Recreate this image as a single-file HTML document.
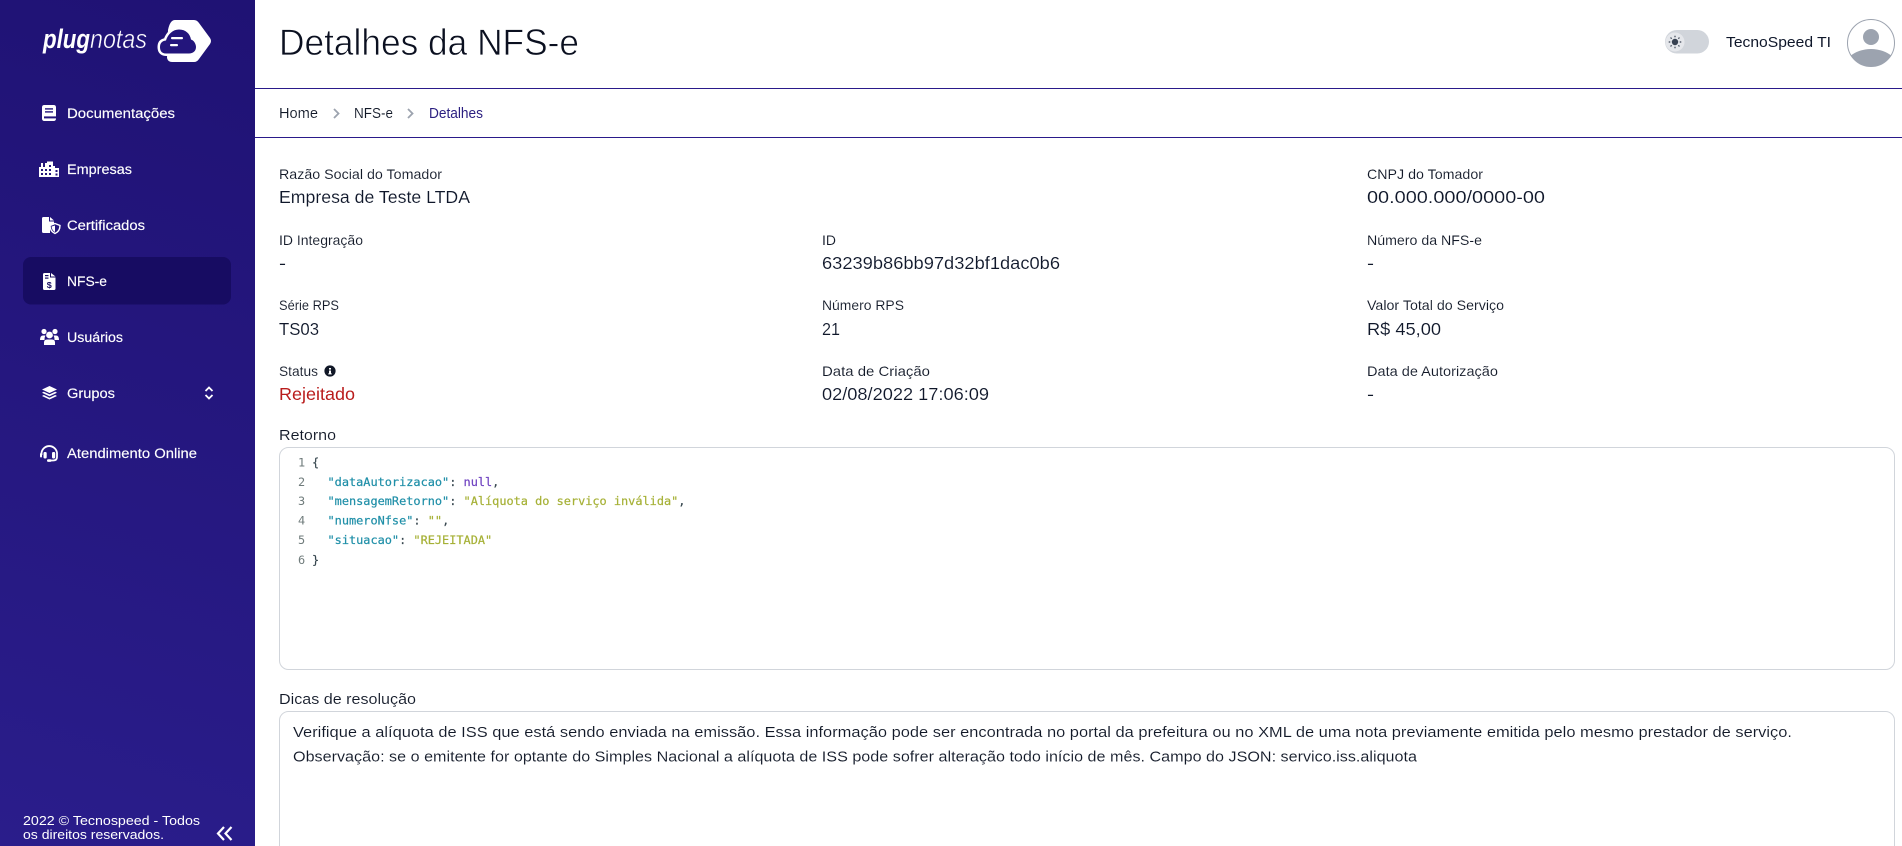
<!DOCTYPE html>
<html lang="pt-BR">
<head>
<meta charset="utf-8">
<title>Detalhes da NFS-e</title>
<style>
html,body{margin:0;padding:0;background:#fff;width:1902px;height:846px;overflow:hidden}
svg{display:block;position:absolute;left:0;top:0}
text{font-family:"Liberation Sans",Arial,sans-serif;white-space:pre}
.nav{fill:#fff;font-size:14.2px;stroke:#fff;stroke-width:.15px}
.l{fill:#111827;font-size:13.8px;stroke:#fff;stroke-width:.1px}
.v{fill:#0f172a;font-size:17.8px;stroke:#fff;stroke-width:.12px}
.d{fill:#111827;font-size:14.6px;stroke:#fff;stroke-width:.1px}
.c text,.c{font-family:"DejaVu Sans Mono","Liberation Mono",monospace;font-size:11.9px}
.n{fill:#6f7b7b}
.k{fill:#1f8fa8;stroke:#1f8fa8;stroke-width:.2px}
.s{fill:#a6b136;stroke:#a6b136;stroke-width:.2px}
.p{fill:#37474f;stroke:#37474f;stroke-width:.15px}
.u{fill:#6f42c1;stroke:#6f42c1;stroke-width:.2px}
</style>
</head>
<body>
<svg width="1902" height="846" viewBox="0 0 1902 846" xmlns="http://www.w3.org/2000/svg">
<defs>
<linearGradient id="g" gradientUnits="userSpaceOnUse" x1="0" y1="846" x2="255" y2="0">
<stop offset="0" stop-color="#2a1d8b"/><stop offset=".6" stop-color="#24167d"/><stop offset="1" stop-color="#1f1274"/>
</linearGradient>
<clipPath id="av"><circle cx="1871" cy="43" r="23.5"/></clipPath>
</defs>
<rect width="1902" height="846" fill="#fff"/>

<!-- Sidebar -->
<rect width="255" height="846" fill="url(#g)"/>
<text x="43" y="48" font-size="27" font-weight="700" font-style="italic" fill="#fff" textLength="47" lengthAdjust="spacingAndGlyphs">plug</text>
<text x="90" y="48" font-size="27" font-style="italic" fill="#fff" stroke="#22157c" stroke-width=".5" textLength="57" lengthAdjust="spacingAndGlyphs">notas</text>
<path d="M175 20H194Q197 20 199 23L210 38Q212 41 210 44L199 59Q197 62 194 62H172Q168 62 167 58L168 30Q170 20 175 20Z" fill="#fff"/>
<path d="M166 53.5C161 53.5 160 50 160 47C160 43 162 41 166 40.5C168 34 173 29.5 179 29.5C186 29.5 190 34 191 39.5C194 40.5 196 44 196 47C196 51 193 53.5 189 53.5Z" fill="#fff" stroke="#fff" stroke-width="5"/>
<path d="M166 53.5C161 53.5 160 50 160 47C160 43 162 41 166 40.5C168 34 173 29.5 179 29.5C186 29.5 190 34 191 39.5C194 40.5 196 44 196 47C196 51 193 53.5 189 53.5Z" fill="#23157c"/>
<rect x="171" y="37" width="12" height="2.2" rx="1" fill="#fff"/>
<rect x="170" y="44" width="8" height="2.2" rx="1" fill="#fff"/>

<rect x="23" y="257" width="208" height="47.5" rx="8" fill="#170c62"/>

<text class="nav" x="67" y="118" textLength="108" lengthAdjust="spacingAndGlyphs">Documentações</text>
<text class="nav" x="67" y="174" textLength="65" lengthAdjust="spacingAndGlyphs">Empresas</text>
<text class="nav" x="67" y="230" textLength="78" lengthAdjust="spacingAndGlyphs">Certificados</text>
<text class="nav" x="67" y="286" textLength="40" lengthAdjust="spacingAndGlyphs">NFS-e</text>
<text class="nav" x="67" y="342" textLength="56" lengthAdjust="spacingAndGlyphs">Usuários</text>
<text class="nav" x="67" y="398" textLength="48" lengthAdjust="spacingAndGlyphs">Grupos</text>
<text class="nav" x="67" y="458" textLength="130" lengthAdjust="spacingAndGlyphs">Atendimento Online</text>

<!-- book -->
<rect x="42" y="105" width="14" height="16" rx="2.2" fill="#fff"/>
<rect x="45" y="108.2" width="8" height="1.4" fill="#23157c"/><rect x="45" y="111.2" width="8" height="1.4" fill="#23157c"/>
<rect x="44" y="116.4" width="12" height="2" fill="#23157c"/>
<!-- city -->
<path d="M39 167H41V163H43V167H45V163H47V161.5H53V166H55V168H59V177H39Z" fill="#fff"/>
<g fill="#23157c"><rect x="41" y="169" width="2" height="2"/><rect x="45" y="169" width="2" height="2"/><rect x="49" y="169" width="2" height="2"/><rect x="41" y="173" width="2" height="2"/><rect x="45" y="173" width="2" height="2"/><rect x="49" y="173" width="2" height="2"/><rect x="49" y="165" width="2" height="2"/><rect x="55.5" y="170" width="2" height="2"/><rect x="55.5" y="173.5" width="2" height="2"/></g>
<!-- certificate -->
<path d="M42 218.5Q42 217 43.5 217H49V221.5H54V224.5L50 226V233H43.5Q42 233 42 231.5Z" fill="#fff"/><path d="M50 217L54 220.5H50Z" fill="#fff"/>
<path d="M55 223.5L60 225.5C60 229 58.5 232 55 233.5C51.5 232 50 229 50 225.5Z" fill="none" stroke="#fff" stroke-width="1.4"/>
<path d="M55 225.5V232C53 231 51.8 229 51.6 226.5Z" fill="#fff"/>
<!-- nfs-e -->
<path d="M43 274.5Q43 273 44.5 273H50V277.5H55.5V288.5Q55.5 290 54 290H44.5Q43 290 43 288.5Z" fill="#fff"/><path d="M51 273L55.5 276.5H51Z" fill="#fff"/>
<rect x="45" y="275" width="3.5" height="1.2" fill="#170c62"/><rect x="45" y="277.5" width="3.5" height="1.2" fill="#170c62"/>
<text x="46.8" y="288" font-size="8.5" font-weight="700" fill="#170c62" textLength="5" lengthAdjust="spacingAndGlyphs">$</text>
<!-- users -->
<g fill="#fff"><circle cx="44" cy="331.5" r="2.6"/><circle cx="55" cy="331.5" r="2.6"/><circle cx="49.5" cy="335" r="3.4"/>
<path d="M40 340Q40 335.5 43 335.5H45.5Q44.5 337 44.5 340Z"/><path d="M59 340Q59 335.5 56 335.5H53.5Q54.5 337 54.5 340Z"/>
<path d="M44 345V342.5Q44 339.5 47 339.5H52Q55 339.5 55 342.5V345Z"/></g>
<!-- layers -->
<g fill="#fff"><path d="M49.5 386L57 389.5L49.5 393L42 389.5Z"/><path d="M43.8 391.7L49.5 394.4L55.2 391.7L57 392.7L49.5 396.2L42 392.7Z"/><path d="M43.8 395L49.5 397.7L55.2 395L57 396L49.5 399.5L42 396Z"/></g>
<!-- chevrons -->
<path d="M205.5 391L209 387.5L212.5 391M205.5 395L209 398.5L212.5 395" fill="none" stroke="#fff" stroke-width="1.8"/>
<!-- headset -->
<path d="M41.5 455V453A7.8 7.8 0 0 1 57 453V457Q57 460.5 53 460.5H49" fill="none" stroke="#fff" stroke-width="1.8"/>
<rect x="43.5" y="452" width="3.2" height="6.5" rx="1.2" fill="#fff"/><rect x="52" y="452" width="3.2" height="6.5" rx="1.2" fill="#fff"/>
<rect x="40" y="453" width="2" height="4.5" rx="1" fill="#fff"/><rect x="47" y="459.3" width="4.5" height="2.6" rx="1.2" fill="#fff"/>

<text x="23" y="825" font-size="13" fill="#fff" textLength="177" lengthAdjust="spacingAndGlyphs">2022 © Tecnospeed - Todos</text>
<text x="23" y="839" font-size="13" fill="#fff" textLength="141" lengthAdjust="spacingAndGlyphs">os direitos reservados.</text>
<path d="M224 827L218 833.5L224 840M231.5 827L225.5 833.5L231.5 840" fill="none" stroke="#fff" stroke-width="2.2"/>

<!-- Header -->
<text x="279" y="55" font-size="37" fill="#0b1020" stroke="#fff" stroke-width=".7" textLength="300" lengthAdjust="spacingAndGlyphs">Detalhes da NFS-e</text>
<rect x="1665" y="30" width="44" height="23.5" rx="11.75" fill="#d1d5db"/>
<circle cx="1675" cy="42" r="9.5" fill="#e5e7eb"/>
<circle cx="1675" cy="42" r="3.2" fill="#374151"/>
<g stroke="#374151" stroke-width="1.2" stroke-linecap="round"><path d="M1675 36.2v.6M1675 47.2v.6M1669.2 42h.6M1680.2 42h.6M1670.9 37.9l.4.4M1678.7 45.7l.4.4M1670.9 46.1l.4-.4M1678.7 38.3l.4-.4"/></g>
<text x="1726" y="47" font-size="14.8" fill="#0f172a" textLength="105" lengthAdjust="spacingAndGlyphs">TecnoSpeed TI</text>
<circle cx="1871" cy="43" r="23.5" fill="#fff" stroke="#9ca3af" stroke-width="1"/>
<circle cx="1871" cy="37" r="8" fill="#9ca3af"/>
<g clip-path="url(#av)"><ellipse cx="1871" cy="74" rx="30" ry="25" fill="#9ca3af"/></g>

<rect x="255" y="88" width="1647" height="1" fill="#2a1a8a"/>
<rect x="255" y="137" width="1647" height="1" fill="#2a1a8a"/>

<!-- Breadcrumb -->
<text class="d" x="279" y="118" textLength="39" lengthAdjust="spacingAndGlyphs">Home</text>
<path d="M334 109L338.5 113.5L334 118" fill="none" stroke="#9ca3af" stroke-width="1.8"/>
<text class="d" x="354" y="118" textLength="39" lengthAdjust="spacingAndGlyphs">NFS-e</text>
<path d="M408 109L412.5 113.5L408 118" fill="none" stroke="#9ca3af" stroke-width="1.8"/>
<text x="429" y="118" font-size="14.6" fill="#2b1f80" textLength="54" lengthAdjust="spacingAndGlyphs">Detalhes</text>

<!-- Fields col 1 -->
<text class="l" x="279" y="179" textLength="163" lengthAdjust="spacingAndGlyphs">Razão Social do Tomador</text>
<text class="v" x="279" y="203" textLength="191" lengthAdjust="spacingAndGlyphs">Empresa de Teste LTDA</text>
<text class="l" x="279" y="245" textLength="84" lengthAdjust="spacingAndGlyphs">ID Integração</text>
<text class="v" x="279" y="269" textLength="7" lengthAdjust="spacingAndGlyphs">-</text>
<text class="l" x="279" y="310" textLength="60" lengthAdjust="spacingAndGlyphs">Série RPS</text>
<text class="v" x="279" y="335" textLength="40" lengthAdjust="spacingAndGlyphs">TS03</text>
<text class="l" x="279" y="376" textLength="39" lengthAdjust="spacingAndGlyphs">Status</text>
<circle cx="330" cy="371" r="5.6" fill="#111827"/><rect x="329" y="368" width="2" height="1.6" fill="#fff"/><rect x="329" y="370.5" width="2" height="3.2" fill="#fff"/><rect x="328.2" y="373.4" width="3.6" height="1" fill="#fff"/>
<text x="279" y="400" font-size="17.8" fill="#b91c1c" textLength="76" lengthAdjust="spacingAndGlyphs">Rejeitado</text>

<!-- Fields col 2 -->
<text class="l" x="822" y="245" textLength="14" lengthAdjust="spacingAndGlyphs">ID</text>
<text class="v" x="822" y="269" textLength="238" lengthAdjust="spacingAndGlyphs">63239b86bb97d32bf1dac0b6</text>
<text class="l" x="822" y="310" textLength="82" lengthAdjust="spacingAndGlyphs">Número RPS</text>
<text class="v" x="822" y="335" textLength="18" lengthAdjust="spacingAndGlyphs">21</text>
<text class="l" x="822" y="376" textLength="108" lengthAdjust="spacingAndGlyphs">Data de Criação</text>
<text class="v" x="822" y="400" textLength="167" lengthAdjust="spacingAndGlyphs">02/08/2022 17:06:09</text>

<!-- Fields col 3 -->
<text class="l" x="1367" y="179" textLength="116" lengthAdjust="spacingAndGlyphs">CNPJ do Tomador</text>
<text class="v" x="1367" y="203" textLength="178" lengthAdjust="spacingAndGlyphs">00.000.000/0000-00</text>
<text class="l" x="1367" y="245" textLength="115" lengthAdjust="spacingAndGlyphs">Número da NFS-e</text>
<text class="v" x="1367" y="269" textLength="7" lengthAdjust="spacingAndGlyphs">-</text>
<text class="l" x="1367" y="310" textLength="137" lengthAdjust="spacingAndGlyphs">Valor Total do Serviço</text>
<text class="v" x="1367" y="335" textLength="74" lengthAdjust="spacingAndGlyphs">R$ 45,00</text>
<text class="l" x="1367" y="376" textLength="131" lengthAdjust="spacingAndGlyphs">Data de Autorização</text>
<text class="v" x="1367" y="400" textLength="7" lengthAdjust="spacingAndGlyphs">-</text>

<!-- Retorno -->
<text class="d" x="279" y="440" textLength="57" lengthAdjust="spacingAndGlyphs">Retorno</text>
<rect x="279.5" y="447.5" width="1615" height="222" rx="9" fill="#fff" stroke="#d1d5db"/>
<g class="c">
<text class="n" x="298" y="466.5">1</text><text class="p" x="312" y="466.5">{</text>
<text class="n" x="298" y="486">2</text><text x="327.5" y="486" xml:space="preserve"><tspan class="k">"dataAutorizacao"</tspan><tspan class="p">: </tspan><tspan class="u">null</tspan><tspan class="p">,</tspan></text>
<text class="n" x="298" y="505">3</text><text x="327.5" y="505" xml:space="preserve"><tspan class="k">"mensagemRetorno"</tspan><tspan class="p">: </tspan><tspan class="s">"Alíquota do serviço inválida"</tspan><tspan class="p">,</tspan></text>
<text class="n" x="298" y="524.5">4</text><text x="327.5" y="524.5" xml:space="preserve"><tspan class="k">"numeroNfse"</tspan><tspan class="p">: </tspan><tspan class="s">""</tspan><tspan class="p">,</tspan></text>
<text class="n" x="298" y="544">5</text><text x="327.5" y="544" xml:space="preserve"><tspan class="k">"situacao"</tspan><tspan class="p">: </tspan><tspan class="s">"REJEITADA"</tspan></text>
<text class="n" x="298" y="564">6</text><text class="p" x="312" y="564">}</text>
</g>

<!-- Dicas -->
<text class="d" x="279" y="704" textLength="137" lengthAdjust="spacingAndGlyphs">Dicas de resolução</text>
<rect x="279.5" y="711.5" width="1615" height="160" rx="9" fill="#fff" stroke="#d1d5db"/>
<text class="d" x="293" y="737" textLength="1499" lengthAdjust="spacingAndGlyphs">Verifique a alíquota de ISS que está sendo enviada na emissão. Essa informação pode ser encontrada no portal da prefeitura ou no XML de uma nota previamente emitida pelo mesmo prestador de serviço.</text>
<text class="d" x="293" y="761.5" textLength="1124" lengthAdjust="spacingAndGlyphs">Observação: se o emitente for optante do Simples Nacional a alíquota de ISS pode sofrer alteração todo início de mês. Campo do JSON: servico.iss.aliquota</text>
</svg>
</body>
</html>
